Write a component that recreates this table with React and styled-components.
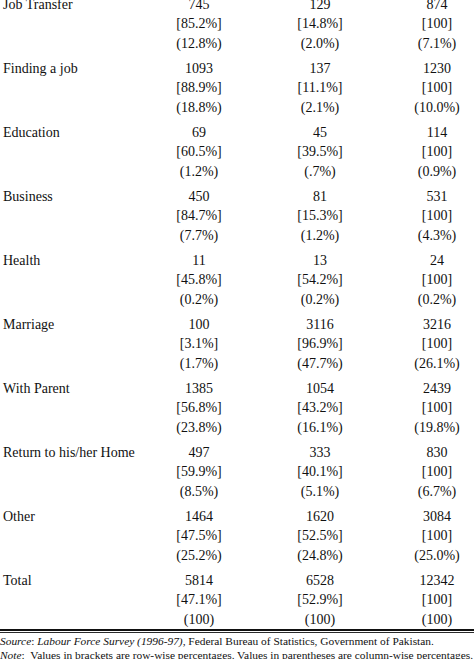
import React from 'react'
import styled, { createGlobalStyle } from 'styled-components'

const GlobalStyle = createGlobalStyle`
  html, body {
    margin: 0;
    padding: 0;
    background: #ffffff;
    overflow: hidden;
  }
  body {
    font-family: "Liberation Serif", "Times New Roman", serif;
    color: #111111;
  }
`

const Page = styled.div`
  width: 474px;
  margin-top: -5.5px;
`

const Body = styled.div`
  display: flex;
  flex-direction: column;
`

const Group = styled.div`
  display: grid;
  grid-template-columns: 141px 110px 132px 83px;
  padding-left: 3px;
  padding-bottom: ${(p) => (p.$last ? '0' : '5.5px')};
  font-size: 14px;
  line-height: 19.5px;
`

const Label = styled.div`
  white-space: nowrap;
`

const Cell = styled.div`
  text-align: center;
  white-space: nowrap;
  padding-left: ${(p) => p.$shift || 0}px;
`

const Rule = styled.div`
  height: 1px;
  border-top: 2px solid #111111;
  border-bottom: 1px solid #2a2a2a;
`

const Footer = styled.div`
  font-size: 11.4px;
  line-height: 14px;
  padding-top: 1px;
  white-space: nowrap;
`

const Line = styled.div``

const rows = [
  ['Job Transfer', ['745', '[85.2%]', '(12.8%)'], ['129', '[14.8%]', '(2.0%)'], ['874', '[100]', '(7.1%)']],
  ['Finding a job', ['1093', '[88.9%]', '(18.8%)'], ['137', '[11.1%]', '(2.1%)'], ['1230', '[100]', '(10.0%)']],
  ['Education', ['69', '[60.5%]', '(1.2%)'], ['45', '[39.5%]', '(.7%)'], ['114', '[100]', '(0.9%)']],
  ['Business', ['450', '[84.7%]', '(7.7%)'], ['81', '[15.3%]', '(1.2%)'], ['531', '[100]', '(4.3%)']],
  ['Health', ['11', '[45.8%]', '(0.2%)'], ['13', '[54.2%]', '(0.2%)'], ['24', '[100]', '(0.2%)']],
  ['Marriage', ['100', '[3.1%]', '(1.7%)'], ['3116', '[96.9%]', '(47.7%)'], ['3216', '[100]', '(26.1%)']],
  ['With Parent', ['1385', '[56.8%]', '(23.8%)'], ['1054', '[43.2%]', '(16.1%)'], ['2439', '[100]', '(19.8%)']],
  ['Return to his/her Home', ['497', '[59.9%]', '(8.5%)'], ['333', '[40.1%]', '(5.1%)'], ['830', '[100]', '(6.7%)']],
  ['Other', ['1464', '[47.5%]', '(25.2%)'], ['1620', '[52.5%]', '(24.8%)'], ['3084', '[100]', '(25.0%)']],
  ['Total', ['5814', '[47.1%]', '(100)'], ['6528', '[52.9%]', '(100)'], ['12342', '[100]', '(100)']],
]

const App = () => {
  return (
    <Page>
      <GlobalStyle />
      <Body>
        {rows.map(([label, a, b, c], gi) => (
          <Group key={label} $last={gi === rows.length - 1}>
            {[0, 1, 2].map((i) => (
              <React.Fragment key={i}>
                <Label>{i === 0 ? label : '\u00a0'}</Label>
                <Cell>{a[i]}</Cell>
                <Cell>{b[i]}</Cell>
                <Cell $shift={19}>{c[i]}</Cell>
              </React.Fragment>
            ))}
          </Group>
        ))}
      </Body>
      <Rule />
      <Footer>
        <Line>
          <i>Source</i>: <i>Labour Force Survey (1996-97)</i>, Federal Bureau of Statistics, Government of Pakistan.
        </Line>
        <Line>
          <i>Note</i>:&nbsp; Values in brackets are row-wise percentages. Values in parentheses are column-wise percentages.
        </Line>
      </Footer>
    </Page>
  )
}

export default App
